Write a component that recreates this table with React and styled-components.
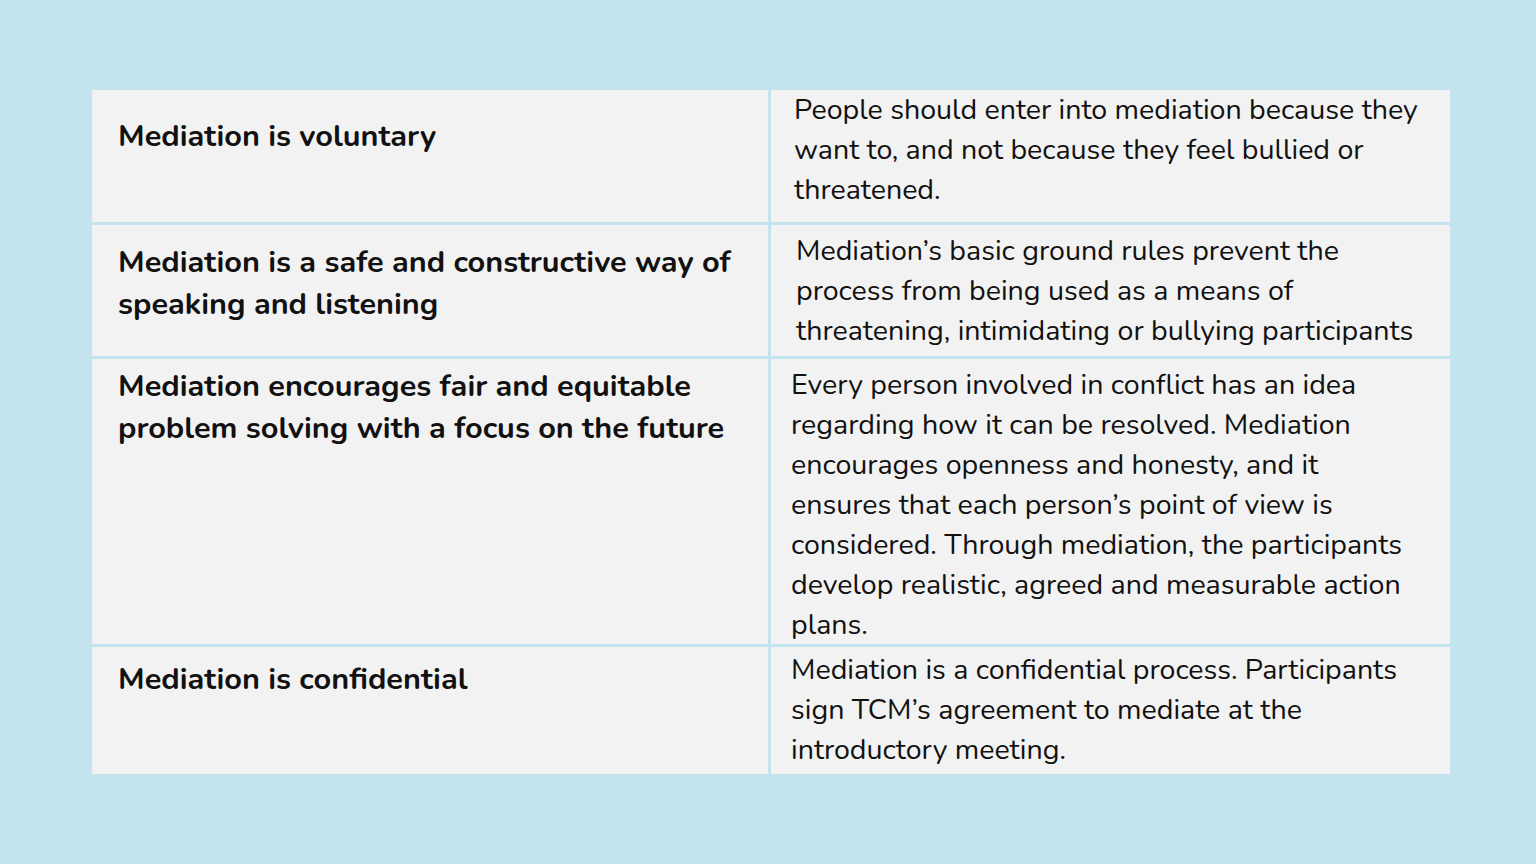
import React from 'react';
import styled, { createGlobalStyle } from 'styled-components';

const GlobalStyle = createGlobalStyle`
  html, body {
    margin: 0;
    padding: 0;
    background: #c3e4ee;
  }
  body {
    font-family: 'Nunito', 'Lato', 'Open Sans', sans-serif;
    color: #111111;
  }
`;

const Page = styled.div`
  width: 1536px;
  height: 864px;
  padding: 90px 0 0 92px;
  box-sizing: border-box;
  background: #c3e4ee;
`;

const Table = styled.div`
  display: grid;
  grid-template-columns: 676px 679px;
  grid-template-rows: 132px 131px 285px 127px;
  column-gap: 3px;
  row-gap: 3px;
  width: 1358px;
`;

const Cell = styled.div`
  background: #f2f2f2;
  box-sizing: border-box;
  padding: ${(p) => p.$top}px ${(p) => p.$right || 10}px 0 ${(p) => p.$left}px;
`;

const Heading = styled.div`
  font-weight: 700;
  font-size: 30.7px;
  line-height: 42px;
`;

const Body = styled.div`
  font-weight: 400;
  font-size: 28.6px;
  line-height: 40px;
`;

const rows = [
  {
    title: 'Mediation is voluntary',
    text: 'People should enter into mediation because they want to, and not because they feel bullied or threatened.',
    titleTop: 25,
    textTop: 0,
    textLeft: 23,
  },
  {
    title: 'Mediation is a safe and constructive way of speaking and listening',
    text: 'Mediation\u2019s basic ground rules prevent the process from being used as a means of threatening, intimidating or bullying participants',
    titleTop: 16,
    textTop: 6,
    textLeft: 25,
  },
  {
    title: 'Mediation encourages fair and equitable problem solving with a focus on the future',
    text: 'Every person involved in conflict has an idea regarding how it can be resolved. Mediation encourages openness and honesty, and it ensures that each person\u2019s point of view is considered. Through mediation, the participants develop realistic, agreed and measurable action plans.',
    titleTop: 6,
    textTop: 6,
    textLeft: 20,
    textRight: 40,
  },
  {
    title: 'Mediation is confidential',
    text: 'Mediation is a confidential process. Participants sign TCM\u2019s agreement to mediate at the introductory meeting.',
    titleTop: 11,
    textTop: 3,
    textLeft: 20,
  },
];

export default function App() {
  return (
    <>
      <GlobalStyle />
      <Page>
        <Table>
          {rows.map((r) => (
            <React.Fragment key={r.title}>
              <Cell $top={r.titleTop} $left={26}>
                <Heading>{r.title}</Heading>
              </Cell>
              <Cell $top={r.textTop} $left={r.textLeft} $right={r.textRight}>
                <Body>{r.text}</Body>
              </Cell>
            </React.Fragment>
          ))}
        </Table>
      </Page>
    </>
  );
}
